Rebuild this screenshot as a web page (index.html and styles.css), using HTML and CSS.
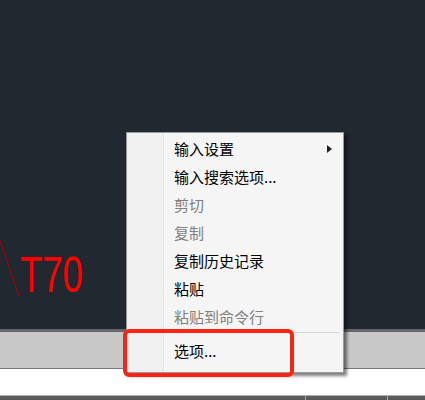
FILE: index.html
```html
<!DOCTYPE html>
<html lang="zh">
<head>
<meta charset="utf-8">
<title>选项</title>
<link rel="stylesheet" href="styles.css">
</head>
<body>
<div class="app">
  <div class="canvas">
    <svg class="leader" width="20" height="56" viewBox="0 0 20 56"><line x1="0" y1="0" x2="19" y2="55" stroke="#b00000" stroke-width="1"/></svg>
    <span class="dim">T70</span>
  </div>
  <div class="edge"></div>
  <div class="toolbar"></div>
  <div class="command"></div>
  <div class="status">
    <span class="cell one"></span><span class="cell two"></span><span class="cell three"></span>
  </div>
</div>
<div class="menu">
  <div class="item"><span>输入设置</span><i class="arrow"></i></div>
  <div class="item"><span>输入搜索选项...</span></div>
  <div class="item off"><span>剪切</span></div>
  <div class="item off"><span>复制</span></div>
  <div class="item"><span>复制历史记录</span></div>
  <div class="item"><span>粘贴</span></div>
  <div class="item off"><span>粘贴到命令行</span></div>
  <div class="sep"></div>
  <div class="item last"><span>选项...</span></div>
</div>
<div class="mark"></div>
</body>
</html>
```
FILE: styles.css
```css
html, body { margin: 0; padding: 0; }
body {
  width: 425px;
  height: 400px;
  overflow: hidden;
  position: relative;
  background: #fff;
  font-family: "Noto Sans CJK SC", "Liberation Sans", sans-serif;
}
.app { display: flex; flex-direction: column; height: 400px; }
.canvas { height: 329px; background: #212830; position: relative; flex: none; }
.leader { position: absolute; left: 0; top: 241px; }
.dim {
  position: absolute;
  left: 20px;
  top: 246px;
  font-family: "Liberation Sans", sans-serif;
  font-size: 50px;
  line-height: 58px;
  color: #f00;
  transform: scaleX(0.73);
  transform-origin: left top;
}
.edge { height: 3px; background: #686868; flex: none; }
.toolbar { height: 36px; background: #c8c8c8; border-bottom: 1px solid #787878; flex: none; }
.command { height: 26px; background: #fff; flex: none; }
.status {
  flex: 1;
  background: #5a5a5a;
  border-top: 1px solid #b0b0b0;
  display: flex;
}
.cell { border-right: 1px solid #a8a8a8; height: 100%; }
.one { width: 305px; }
.two { width: 81px; }
.three { flex: 1; border-right: 0; }
.menu {
  position: absolute;
  left: 126px;
  top: 132px;
  width: 216px;
  height: 237px;
  border: 1px solid #9a9a9a;
  background: linear-gradient(to right, #f1f1f1 0, #f1f1f1 36px, #e4e4e4 36px, #e4e4e4 37px, #fff 37px, #f5f5f5 38px);
  box-shadow: 3px 3px 3px rgba(0, 0, 0, 0.5);
  padding-top: 2px;
  box-sizing: content-box;
}
.item {
  height: 28px;
  padding-left: 47px;
  padding-right: 11px;
  display: flex;
  align-items: center;
  justify-content: space-between;
  font-size: 15px;
  line-height: 28px;
  color: #000;
}
.off { color: #808080; }
.arrow {
  width: 0;
  height: 0;
  border-left: 5px solid #222;
  border-top: 4px solid transparent;
  border-bottom: 4px solid transparent;
}
.sep { height: 1px; background: #d8d8d8; margin: 1px 3px 0 38px; }
.last { margin-top: 4px; }
.mark {
  position: absolute;
  left: 123px;
  top: 329px;
  width: 163px;
  height: 40px;
  border: 4px solid #fa2314;
  border-radius: 6px;
}
```
